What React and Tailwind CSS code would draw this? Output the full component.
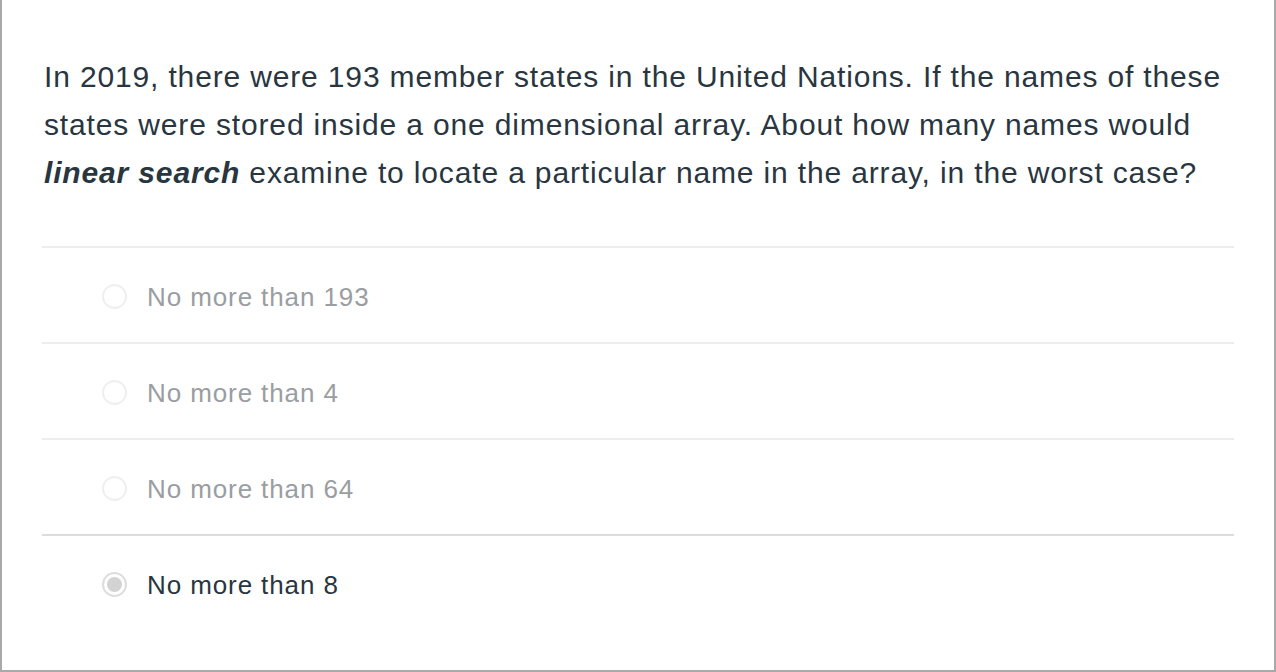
export default function App() {
  const options = [
    { label: "No more than 193", selected: false },
    { label: "No more than 4", selected: false },
    { label: "No more than 64", selected: false },
    { label: "No more than 8", selected: true },
  ];
  return (
    <div
      className="w-[1276px] h-[672px] bg-white border-x-2 border-b-2 border-[#a9a9a9] pl-[40px] pr-[40px] pt-[53px] overflow-hidden"
      style={{ fontFamily: '"Liberation Sans", Arial, sans-serif' }}
    >
      <p className="text-[30px] leading-[48px] tracking-[0.85px] text-[#29363f] pl-[2px] whitespace-nowrap">
        In 2019, there were 193 member states in the United Nations. If the names of these
        <br />
        states were stored inside a one dimensional array. About how many names would
        <br />
        <b className="italic font-bold">linear search</b> examine to locate a particular name in the array, in the worst case?
      </p>
      <div className="mt-[49px]">
        {options.map((o) => (
          <div
            key={o.label}
            className={`h-[96px] border-t-2 ${o.selected ? "border-[#dcdcdc]" : "border-[#ededed]"} flex items-start pt-[35px] pl-[60px]`}
          >
            <div
              className={`w-[25px] h-[25px] rounded-full border-2 mt-[1px] flex items-center justify-center shrink-0 ${o.selected ? "border-[#dddddd]" : "border-[#efefef]"}`}
            >
              {o.selected && <div className="w-[15px] h-[15px] rounded-full bg-[#d3d3d3]" />}
            </div>
            <span
              className={`ml-[20px] text-[26px] leading-[28px] tracking-[0.9px] ${o.selected ? "text-[#29363f]" : "text-[#9a9da2]"}`}
            >
              {o.label}
            </span>
          </div>
        ))}
      </div>
    </div>
  );
}
